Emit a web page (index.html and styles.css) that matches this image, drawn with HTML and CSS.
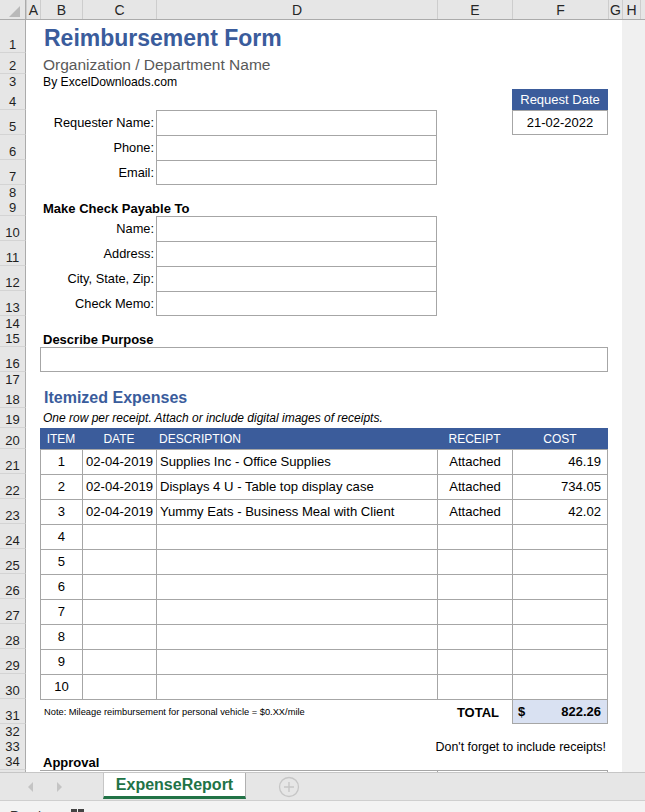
FILE: index.html
```html
<!DOCTYPE html>
<html>
<head>
<meta charset="utf-8">
<link rel="stylesheet" href="styles.css">
</head>
<body>
<div class="app">
  <div class="colhdr">
    <div class="corner"><svg width="12" height="11" viewBox="0 0 12 11"><polygon points="11,0 11,11 0,11" fill="#b9b9b9"/></svg></div>
    <div>A</div><div>B</div><div>C</div><div>D</div><div>E</div><div>F</div><div>G</div><div>H</div><div></div>
  </div>
  <div class="sheet">
    <div class="rows">
      <div class="row r33"><div class="rh">1</div><div class="sbg t title">Reimbursement Form</div></div>
      <div class="row r21"><div class="rh">2</div><div class="sbg t org">Organization / Department Name</div></div>
      <div class="row r15"><div class="rh">3</div><div class="sbg t by">By ExcelDownloads.com</div></div>
      <div class="row r21"><div class="rh">4</div><div class="cf t hdr ctr">Request Date</div></div>
      <div class="row r25"><div class="rh">5</div><div class="sbc t lbl">Requester Name:</div><div class="cd bx"></div><div class="cf bx last t ctr val">21-02-2022</div></div>
      <div class="row r25"><div class="rh">6</div><div class="sbc t lbl">Phone:</div><div class="cd bx"></div></div>
      <div class="row r25"><div class="rh">7</div><div class="sbc t lbl">Email:</div><div class="cd bx last"></div></div>
      <div class="row r15"><div class="rh">8</div></div>
      <div class="row r16"><div class="rh">9</div><div class="sbg t sec">Make Check Payable To</div></div>
      <div class="row r25"><div class="rh">10</div><div class="sbc t lbl">Name:</div><div class="cd bx"></div></div>
      <div class="row r25"><div class="rh">11</div><div class="sbc t lbl">Address:</div><div class="cd bx"></div></div>
      <div class="row r25"><div class="rh">12</div><div class="sbc t lbl">City, State, Zip:</div><div class="cd bx"></div></div>
      <div class="row r25"><div class="rh">13</div><div class="sbc t lbl">Check Memo:</div><div class="cd bx last"></div></div>
      <div class="row r15"><div class="rh">14</div></div>
      <div class="row r16"><div class="rh">15</div><div class="sbg t sec">Describe Purpose</div></div>
      <div class="row r25"><div class="rh">16</div><div class="sbf bx last"></div></div>
      <div class="row r15"><div class="rh">17</div></div>
      <div class="row r21"><div class="rh">18</div><div class="sbg t h2">Itemized Expenses</div></div>
      <div class="row r20"><div class="rh">19</div><div class="sbg t hint">One row per receipt. Attach or include digital images of receipts.</div></div>
      <div class="row r21 thead"><div class="rh">20</div><div class="cb th ctr">ITEM</div><div class="cc th ctr">DATE</div><div class="cd th">DESCRIPTION</div><div class="ce th ctr">RECEIPT</div><div class="cf th ctr">COST</div></div>
      <div class="row r25"><div class="rh">21</div><div class="cb td ctr">1</div><div class="cc td ctr">02-04-2019</div><div class="cd td">Supplies Inc - Office Supplies</div><div class="ce td ctr">Attached</div><div class="cf td rgt">46.19</div></div>
      <div class="row r25"><div class="rh">22</div><div class="cb td ctr">2</div><div class="cc td ctr">02-04-2019</div><div class="cd td">Displays 4 U - Table top display case</div><div class="ce td ctr">Attached</div><div class="cf td rgt">734.05</div></div>
      <div class="row r25"><div class="rh">23</div><div class="cb td ctr">3</div><div class="cc td ctr">02-04-2019</div><div class="cd td">Yummy Eats - Business Meal with Client</div><div class="ce td ctr">Attached</div><div class="cf td rgt">42.02</div></div>
      <div class="row r25"><div class="rh">24</div><div class="cb td ctr">4</div><div class="cc td"></div><div class="cd td"></div><div class="ce td"></div><div class="cf td"></div></div>
      <div class="row r25"><div class="rh">25</div><div class="cb td ctr">5</div><div class="cc td"></div><div class="cd td"></div><div class="ce td"></div><div class="cf td"></div></div>
      <div class="row r25"><div class="rh">26</div><div class="cb td ctr">6</div><div class="cc td"></div><div class="cd td"></div><div class="ce td"></div><div class="cf td"></div></div>
      <div class="row r25"><div class="rh">27</div><div class="cb td ctr">7</div><div class="cc td"></div><div class="cd td"></div><div class="ce td"></div><div class="cf td"></div></div>
      <div class="row r25"><div class="rh">28</div><div class="cb td ctr">8</div><div class="cc td"></div><div class="cd td"></div><div class="ce td"></div><div class="cf td"></div></div>
      <div class="row r25"><div class="rh">29</div><div class="cb td ctr">9</div><div class="cc td"></div><div class="cd td"></div><div class="ce td"></div><div class="cf td"></div></div>
      <div class="row r25"><div class="rh">30</div><div class="cb td ctr">10</div><div class="cc td"></div><div class="cd td"></div><div class="ce td"></div><div class="cf td"></div></div>
      <div class="row r25"><div class="rh">31</div><div class="sbd t note topline">Note: Mileage reimbursement for personal vehicle = $0.XX/mile</div><div class="ce t rgt total topline">TOTAL</div><div class="cf totbox"><span>$</span><span>822.26</span></div></div>
      <div class="row r15"><div class="rh">32</div></div>
      <div class="row r15"><div class="rh">33</div><div class="sbf t rgt remind">Don't forget to include receipts!</div></div>
      <div class="row r16"><div class="rh">34</div><div class="sbg t sec">Approval</div></div>
      <div class="row r16"><div class="rh"></div><div class="sbd boxtop"></div><div class="sef boxtop boxside"></div></div>
    </div>
    <div class="strip"></div>
  </div>
  <div class="tabbar">
    <div class="nav">
      <svg width="8" height="10" viewBox="0 0 8 10"><polygon points="6,0 6,10 1,5" fill="#c4c4c4"/></svg>
      <svg width="8" height="10" viewBox="0 0 8 10"><polygon points="2,0 2,10 7,5" fill="#c4c4c4"/></svg>
    </div>
    <div class="tab">ExpenseReport</div>
    <div class="add"><svg width="22" height="22" viewBox="0 0 22 22"><circle cx="11" cy="11" r="9.5" fill="none" stroke="#c6c6c6" stroke-width="1.3"/><path d="M11 6v10M6 11h10" stroke="#c6c6c6" stroke-width="1.4"/></svg></div>
  </div>
  <div class="status">
    <span class="ready">Ready</span>
    <svg class="macro" width="16" height="12" viewBox="0 0 16 12"><rect x="1" y="0" width="6" height="6" fill="#444"/><rect x="8" y="0" width="6" height="6" fill="#444"/><rect x="1" y="7" width="13" height="5" fill="#444"/></svg>
  </div>
</div>
</body>
</html>
```
FILE: styles.css
```css
* { box-sizing: border-box; margin: 0; padding: 0; }
html, body { margin: 0; background: #fff; }
body {
  width: 645px;
  height: 812px;
  overflow: hidden;
  font-family: "Liberation Sans", Arial, sans-serif;
  color: #000;
}
.app { width: 645px; height: 812px; display: flex; flex-direction: column; overflow: hidden; }

/* column header */
.colhdr {
  display: grid;
  grid-template-columns: 26px 14px 42px 74px 281px 75px 96px 14px 18px 5px;
  height: 20px;
  flex: none;
  background: #e6e6e6;
  border-bottom: 1px solid #ababab;
}
.colhdr > div {
  border-left: 1px solid #cdcdcd;
  display: flex;
  align-items: center;
  justify-content: center;
  font-size: 14px;
  color: #262626;
  padding-top: 1px;
}
.colhdr > .corner {
  border-left: 0;
  border-right: 1px solid #ababab;
  align-items: flex-end;
  justify-content: flex-end;
  padding: 0 4px 2px 0;
}

/* sheet */
.sheet { display: flex; height: 752px; flex: none; overflow: hidden; }
.rows { width: 622px; flex: none; background: #fff; }
.strip { flex: 1; background: #f0f0f0; }
.row {
  display: grid;
  grid-template-columns: 26px 14px 42px 74px 281px 75px 96px 14px;
}
.r15 { height: 15px; }
.r16 { height: 16px; }
.r20 { height: 20px; }
.r21 { height: 21px; }
.r25 { height: 25px; }
.r33 { height: 33px; }

.rh {
  grid-column: 1;
  background: #e6e6e6;
  border-right: 1px solid #ababab;
  border-bottom: 1px solid #d4d4d4;
  display: flex;
  align-items: flex-end;
  justify-content: center;
  font-size: 13px;
  line-height: 15px;
  color: #1f1f1f;
}

/* placement */
.cb { grid-column: 3; }
.cc { grid-column: 4; }
.cd { grid-column: 5; }
.ce { grid-column: 6; }
.cf { grid-column: 7; }
.sbc { grid-column: 3 / 5; }
.sbd { grid-column: 3 / 6; }
.sbf { grid-column: 3 / 8; }
.sbg { grid-column: 3 / 9; }
.sef { grid-column: 6 / 8; }

/* text cells */
.t { display: flex; align-items: center; white-space: nowrap; padding-left: 3px; }
.ctr { justify-content: center; padding-left: 0; }
.rgt { justify-content: flex-end; padding-left: 0; }

.title { font-size: 23px; font-weight: bold; color: #3a5c9c; align-items: flex-end; padding-bottom: 1px; padding-left: 4px; }
.org { font-size: 15.5px; color: #595959; align-items: flex-end; padding-left: 3px; }
.by { font-size: 12.2px; padding-left: 3px; }
.hdr { background: #3b5c9b; color: #fff; font-size: 13px; }
.val { font-size: 13px; }
.lbl { justify-content: flex-end; padding-right: 2px; font-size: 12.8px; padding-left: 0; }
.sec { font-size: 13px; font-weight: bold; }
.h2 { font-size: 16px; font-weight: bold; color: #3a5c9c; padding-left: 4px; }
.hint { font-size: 12px; font-style: italic; }
.note { font-size: 9.3px; padding-left: 4px; }
.total { font-size: 13px; font-weight: bold; padding-right: 13px; }
.remind { font-size: 12.4px; padding-right: 2px; }

/* boxes */
.bx { border: 1px solid #a6a6a6; border-bottom: 0; }
.bx.last { border-bottom: 1px solid #a6a6a6; }

/* table */
.thead .th {
  background: #3b5c9b;
  color: #fff;
  font-size: 12px;
  display: flex;
  align-items: center;
  white-space: nowrap;
  padding-left: 3px;
}
.thead .th.ctr { padding-left: 0; }
.td {
  border-top: 1px solid #a6a6a6;
  border-left: 1px solid #a6a6a6;
  font-size: 13.1px;
  display: flex;
  align-items: center;
  white-space: nowrap;
  padding-left: 3px;
  padding-bottom: 1px;
}
.td.ctr { padding-left: 0; justify-content: center; }
.td.rgt { padding-left: 0; justify-content: flex-end; padding-right: 6px; }
.cf.td { border-right: 1px solid #a6a6a6; }

.topline { border-top: 1px solid #a6a6a6; }
.totbox {
  border: 1px solid #a6a6a6;
  background: #d9e1f2;
  display: flex;
  align-items: center;
  justify-content: space-between;
  padding: 0 6px 0 5px;
  font-size: 13px;
  font-weight: bold;
}
.boxtop { border-top: 1px solid #a6a6a6; }
.boxside { border-left: 1px solid #a6a6a6; border-right: 1px solid #a6a6a6; }

/* tab bar */
.tabbar {
  height: 29px;
  flex: none;
  background: #e6e6e6;
  border-top: 1px solid #c6c6c6;
  border-bottom: 1px solid #cfcfcf;
  display: flex;
  align-items: stretch;
}
.nav {
  width: 103px;
  display: flex;
  align-items: center;
  gap: 20px;
  padding-left: 27px;
}
.tab {
  width: 143px;
  background: #fff;
  border-left: 1px solid #c6c6c6;
  border-right: 1px solid #b0b0b0;
  border-bottom: 3px solid #217346;
  color: #217346;
  font-weight: bold;
  font-size: 16px;
  display: flex;
  align-items: center;
  justify-content: center;
  margin-bottom: 1px;
  padding-top: 1px;
}
.add { display: flex; align-items: center; margin-left: 32px; }

/* status bar */
.status {
  flex: 1;
  background: #f3f3f3;
  display: flex;
  align-items: flex-start;
  padding: 7px 0 0 10px;
  gap: 22px;
  overflow: hidden;
}
.ready { font-size: 13px; color: #333; line-height: 15px; }
.macro { margin-top: 1px; }
```
